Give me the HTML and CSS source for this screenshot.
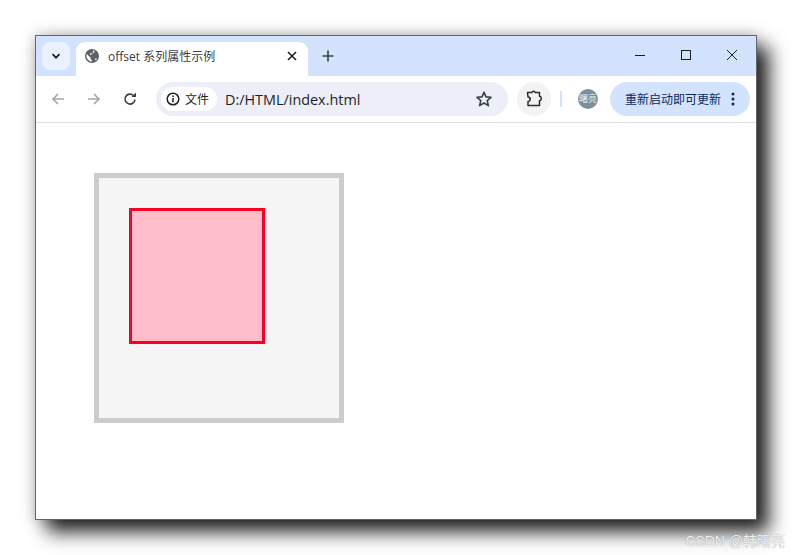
FILE: index.html
```html
<!DOCTYPE html>
<html lang="zh">
<head>
<meta charset="utf-8">
<title>offset 系列属性示例</title>
<link rel="stylesheet" href="styles.css">
</head>
<body>
<div class="window">
  <div class="titlebar">
    <button class="tab-search">
      <svg width="12" height="12" viewBox="0 0 12 12"><path d="M2.5 4.2 6 7.7l3.5-3.5" fill="none" stroke="#1f1f1f" stroke-width="1.7"/></svg>
    </button>
    <div class="tab">
      <svg class="favicon" width="16" height="16" viewBox="0 0 16 16"><circle cx="8" cy="8" r="7" fill="#5f6368"/><path d="M2.600 6 6.500 9.500v1.200l1.200 1.300v1.800A6.200 6.200 0 0 1 2.600 6zM9.200 2.500h1.300v1.600L9 5.300H7.500v1.400H6V5.500l3.200-1zM11 10.500h1.300l.6.800-1.200 1.200z" fill="#fff"/></svg>
      <span class="tab-title">offset 系列属性示例</span>
      <svg class="tab-close" width="10" height="10" viewBox="0 0 10 10"><path d="M1 1l8 8M9 1 1 9" stroke="#1f1f1f" stroke-width="1.600"/></svg>
    </div>
    <svg class="new-tab" width="12" height="12" viewBox="0 0 12 12"><path d="M6 .5v11M.5 6h11" stroke="#3c4043" stroke-width="1.600"/></svg>
    <div class="win-controls">
      <svg width="12" height="12" viewBox="0 0 12 12"><path d="M1 6.500h10" stroke="#1f1f1f" stroke-width="1"/></svg>
      <svg width="12" height="12" viewBox="0 0 12 12"><rect x="1.500" y="1.500" width="9" height="9" fill="none" stroke="#1f1f1f"/></svg>
      <svg width="12" height="12" viewBox="0 0 12 12"><path d="M1 1l10 10M11 1 1 11" stroke="#1f1f1f"/></svg>
    </div>
  </div>
  <div class="toolbar">
    <svg class="nav" width="16" height="16" viewBox="0 0 16 16"><path d="M14 8H3M8 3 3 8l5 5" fill="none" stroke="#a4a6a9" stroke-width="1.600"/></svg>
    <svg class="nav" width="16" height="16" viewBox="0 0 16 16"><path d="M2 8h11M8 3l5 5-5 5" fill="none" stroke="#a4a6a9" stroke-width="1.600"/></svg>
    <svg class="nav" width="16" height="16" viewBox="0 0 16 16"><path d="M13 8.500A5 5 0 1 1 11.500 4.500" fill="none" stroke="#3c4043" stroke-width="1.600"/><path d="M9.500 6h4.500V1.500z" fill="#3c4043"/></svg>
    <div class="omnibox">
      <div class="chip">
        <svg width="14" height="14" viewBox="0 0 14 14"><circle cx="7" cy="7" r="5.800" fill="none" stroke="#1f1f1f" stroke-width="1.500"/><path d="M7 6v4.200" stroke="#1f1f1f" stroke-width="1.500"/><circle cx="7" cy="4.200" r=".9" fill="#1f1f1f"/></svg>
        <span>文件</span>
      </div>
      <span class="url">D:/HTML/index.html</span>
      <svg class="star" width="18" height="18" viewBox="0 0 18 18"><path d="M9 2.200l2 4.700 5 .4-3.800 3.300 1.200 5L9 13l-4.400 2.600 1.200-5L2 7.300l5-.4z" fill="none" stroke="#3c4043" stroke-width="1.600" stroke-linejoin="round"/></svg>
    </div>
    <div class="ext">
      <svg width="18" height="18" viewBox="0 0 18 18"><path d="M2.500 2.500h4.300a1.800 1.800 0 0 1 3.400 0h4.300v3.800a2.300 2.300 0 0 1 0 4.500v4.700H3v-4a2 2 0 0 0 0-4.500z" fill="none" stroke="#2b2b2b" stroke-width="1.500" stroke-linejoin="round"/></svg>
    </div>
    <div class="sep"></div>
    <div class="avatar">曙亮</div>
    <div class="update">
      <span>重新启动即可更新</span>
      <svg width="4" height="14" viewBox="0 0 4 14"><circle cx="2" cy="2" r="1.500" fill="#0b2a5c"/><circle cx="2" cy="7" r="1.500" fill="#0b2a5c"/><circle cx="2" cy="12" r="1.500" fill="#0b2a5c"/></svg>
    </div>
  </div>
  <div class="content">
    <div class="father">
      <div class="son"></div>
    </div>
  </div>
</div>
<div class="watermark">CSDN @韩曙亮</div>
</body>
</html>
```
FILE: styles.css
```css
html, body {
  margin: 0;
  height: 555px;
  overflow: hidden;
  background: #fff;
}
body {
  padding: 35px 0 0 35px;
  box-sizing: border-box;
  font-family: "Open Sans", "Noto Sans CJK SC", sans-serif;
}
.window {
  width: 722px;
  height: 485px;
  box-sizing: border-box;
  border: 1px solid #666;
  background: #fff;
  display: flex;
  flex-direction: column;
  box-shadow: 12px 12px 18px rgba(0, 0, 0, .85), 0 0 14px rgba(0, 0, 0, .25);
}
.titlebar {
  height: 40px;
  flex: none;
  background: #d3e3fd;
  display: flex;
  align-items: flex-start;
  position: relative;
}
.tab-search {
  width: 28px;
  height: 28px;
  margin: 6px 0 0 6px;
  padding: 0;
  border: 0;
  border-radius: 8px;
  background: #e9f0fe;
  display: flex;
  align-items: center;
  justify-content: center;
}
.tab {
  width: 232px;
  height: 34px;
  margin: 6px 0 0 6px;
  background: #fff;
  border-radius: 9px 9px 0 0;
  display: flex;
  align-items: center;
  padding: 0 10px 6px 8px;
  box-sizing: border-box;
}
.favicon { flex: none; }
.tab-title {
  margin-left: 8px;
  font-size: 12px;
  color: #3c4043;
  flex: 1;
  white-space: nowrap;
}
.tab-close { flex: none; margin-right: 1px; }
.new-tab { margin: 14px 0 0 14px; }
.win-controls {
  margin-left: auto;
  display: flex;
  gap: 34px;
  padding: 13px 18px 0 0;
}
.toolbar {
  height: 47px;
  flex: none;
  box-sizing: border-box;
  background: #fff;
  border-radius: 8px 8px 0 0;
  border-bottom: 1px solid #dadce0;
  display: flex;
  align-items: center;
  padding: 0 6px 0 14px;
}
.nav { margin-right: 20px; flex: none; }
.nav:nth-child(3) { margin-right: 18px; }
.omnibox {
  width: 352px;
  height: 34px;
  background: #eceff8;
  border-radius: 17px;
  display: flex;
  align-items: center;
  padding: 0 15px 0 5px;
  box-sizing: border-box;
  flex: none;
}
.chip {
  height: 24px;
  width: 56px;
  background: #fff;
  border-radius: 12px;
  display: flex;
  align-items: center;
  gap: 5px;
  padding-left: 5px;
  box-sizing: border-box;
  font-size: 12px;
  color: #1f1f1f;
  flex: none;
}
.url {
  margin-left: 8px;
  font-size: 14.4px;
  color: #1f1f1f;
  flex: 1;
}
.star { flex: none; }
.ext {
  width: 34px;
  height: 34px;
  margin-left: 9px;
  border-radius: 50%;
  background: #f3f3f3;
  display: flex;
  align-items: center;
  justify-content: center;
  flex: none;
}
.sep {
  width: 2px;
  height: 16px;
  margin-left: 9px;
  background: #d3e3fd;
  flex: none;
}
.avatar {
  width: 20px;
  height: 20px;
  margin-left: 16px;
  border-radius: 50%;
  background: #7a919c;
  color: #e8eef0;
  font-size: 9px;
  line-height: 20px;
  text-align: center;
  white-space: nowrap;
  overflow: hidden;
  flex: none;
}
.update {
  width: 140px;
  height: 34px;
  margin-left: 12px;
  box-sizing: border-box;
  background: #d3e3fd;
  border-radius: 17px;
  display: flex;
  align-items: center;
  justify-content: space-between;
  padding: 0 15px;
  font-size: 12px;
  color: #0b2a5c;
  white-space: nowrap;
  flex: none;
}
.content {
  flex: 1;
  padding: 50px 0 0 58px;
  background: #fff;
}
.father {
  width: 250px;
  height: 250px;
  box-sizing: border-box;
  border: 5px solid #ccc;
  background: #f5f5f5;
  padding: 30px;
}
.son {
  width: 136px;
  height: 136px;
  box-sizing: border-box;
  border: 3px solid #f80024;
  background: #ffbccb;
}
.watermark {
  position: absolute;
  right: 7px;
  bottom: 5px;
  font-family: "Liberation Sans", "Noto Sans CJK SC", sans-serif;
  font-size: 14px;
  color: rgba(255, 255, 255, .85);
  text-shadow: 0 0 1px #888;
  white-space: nowrap;
}
```
